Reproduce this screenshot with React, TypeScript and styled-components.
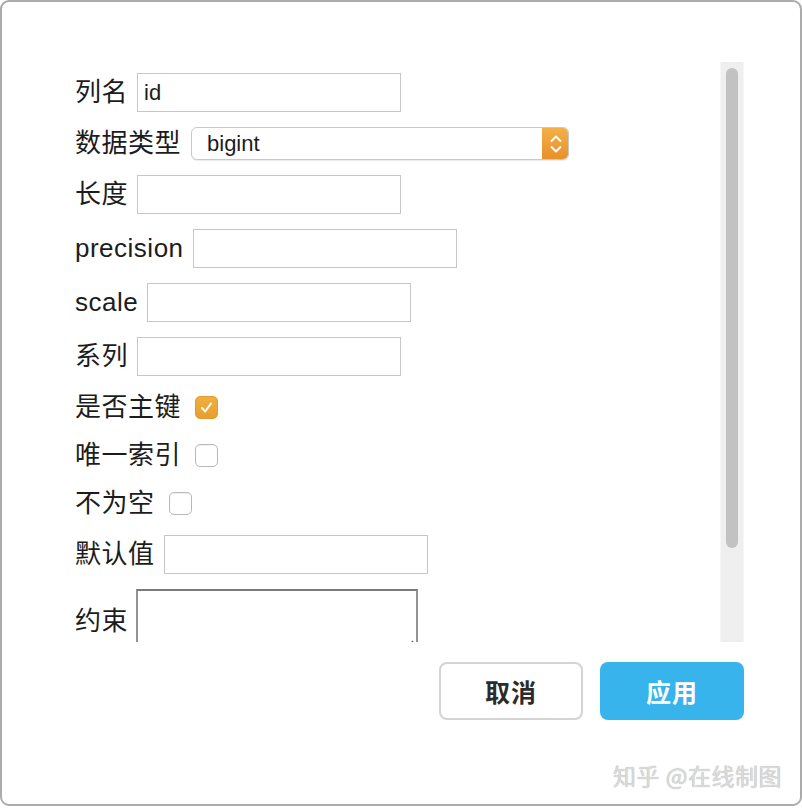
import React from 'react'
import styled, { createGlobalStyle } from 'styled-components'

const GlobalStyle = createGlobalStyle`
  html, body {
    margin: 0;
    padding: 0;
    background: #ffffff;
  }
  body {
    font-family: "Liberation Sans", "Noto Sans CJK SC", sans-serif;
    color: #1c1c1c;
  }
`

const Window = styled.div`
  box-sizing: border-box;
  width: 802px;
  height: 806px;
  border: 2px solid #ababab;
  border-radius: 9px;
  background: #ffffff;
  padding: 60px 56px 0 73px;
  display: flex;
  flex-direction: column;
`

const ScrollArea = styled.div`
  display: flex;
  height: 580px;
`

const Form = styled.div`
  flex: 1;
  overflow: hidden;
  padding-top: 11px;
  display: flex;
  flex-direction: column;
  gap: 15px;
`

const Row = styled.div`
  display: flex;
  align-items: center;
  gap: 9px;
  min-height: 33px;
  flex-shrink: 0;
`

const Label = styled.span`
  font-size: 26px;
  line-height: 33px;
  letter-spacing: 0.5px;
  white-space: nowrap;
`

const TextInput = styled.input`
  box-sizing: border-box;
  width: 264px;
  height: 39px;
  border: 1px solid #c6c6c6;
  border-radius: 0;
  padding: 0 6px;
  font-family: "Liberation Sans", sans-serif;
  font-size: 22px;
  color: #1c1c1c;
  outline: none;
  background: #fff;
`

const SelectBox = styled.div`
  box-sizing: border-box;
  width: 378px;
  height: 33px;
  margin-left: 1px;
  border: 1px solid #c9c9c9;
  border-radius: 6px;
  box-shadow: 0 1px 1px rgba(0, 0, 0, 0.08);
  display: flex;
  align-items: center;
  overflow: hidden;
  background: #fff;
`

const SelectValue = styled.span`
  flex: 1;
  padding-left: 15px;
  font-size: 22px;
  color: #1c1c1c;
`

const SelectCap = styled.span`
  width: 27px;
  align-self: stretch;
  margin: -1px -1px -1px 0;
  background: linear-gradient(#f4b048, #e8902a);
  display: flex;
  align-items: center;
  justify-content: center;
`

const Check = styled.span<{ $checked?: boolean }>`
  box-sizing: border-box;
  width: 23px;
  height: 23px;
  margin-left: 5px;
  border-radius: 5px;
  display: flex;
  align-items: center;
  justify-content: center;
  background: ${({ $checked }) =>
    $checked ? 'linear-gradient(#f1ae40, #e89e30)' : '#ffffff'};
  border: 1px solid ${({ $checked }) => ($checked ? '#e39a2e' : '#b9b9b9')};
  box-shadow: ${({ $checked }) =>
    $checked ? 'none' : 'inset 0 1px 1px rgba(0,0,0,0.06)'};
`

const TextArea = styled.div`
  position: relative;
  box-sizing: border-box;
  width: 282px;
  height: 64px;
  margin-left: -1px;
  border: 2px solid #939393;
  border-top-color: #7a7a7a;
  background: #fff;
`

const Grip = styled.svg`
  position: absolute;
  right: 2px;
  bottom: 2px;
`

const Track = styled.div`
  width: 24px;
  flex-shrink: 0;
  box-sizing: border-box;
  background: #efefef;
  border-left: 1px solid #f6f6f6;
  border-right: 1px solid #f6f6f6;
  padding-top: 6px;
`

const Thumb = styled.div`
  width: 12px;
  height: 480px;
  margin: 0 auto;
  border-radius: 6px;
  background: #c2c2c2;
`

const ButtonBar = styled.div`
  display: flex;
  justify-content: flex-end;
  gap: 17px;
  margin-top: 20px;
`

const Button = styled.button<{ $primary?: boolean }>`
  box-sizing: border-box;
  width: 144px;
  height: 58px;
  border-radius: 8px;
  border: ${({ $primary }) => ($primary ? 'none' : '2px solid #d4d4d4')};
  background: ${({ $primary }) => ($primary ? '#38b4ec' : '#ffffff')};
  color: ${({ $primary }) => ($primary ? '#ffffff' : '#2b2b2b')};
  font-family: "Noto Sans CJK SC", sans-serif;
  font-weight: 700;
  font-size: 25px;
  letter-spacing: 1px;
  padding: 0;
`

const Watermark = styled.div`
  align-self: flex-end;
  margin-top: 40px;
  margin-right: -38px;
  font-family: "Noto Sans CJK SC", sans-serif;
  font-size: 23px;
  line-height: 30px;
  color: #dadada;
  text-shadow: 0 0 1px #a8a8a8;
  letter-spacing: 0.5px;
`

const CheckMark = () => (
  <svg width="15" height="15" viewBox="0 0 15 15">
    <path d="M3 8 L6.2 11.5 L12 3.5" fill="none" stroke="#fff" strokeWidth="2" strokeLinecap="round" strokeLinejoin="round" />
  </svg>
)

const Chevrons = () => (
  <svg width="14" height="22" viewBox="0 0 14 22">
    <path d="M2.5 8 L7 3.5 L11.5 8" fill="none" stroke="#fff" strokeWidth="1.8" strokeLinecap="round" strokeLinejoin="round" />
    <path d="M2.5 14 L7 18.5 L11.5 14" fill="none" stroke="#fff" strokeWidth="1.8" strokeLinecap="round" strokeLinejoin="round" />
  </svg>
)

const fields: { label: string }[] = [
  { label: '长度' },
  { label: 'precision' },
  { label: 'scale' },
  { label: '系列' },
]

const flags: { label: string; checked: boolean }[] = [
  { label: '是否主键', checked: true },
  { label: '唯一索引', checked: false },
  { label: '不为空', checked: false },
]

export default function App() {
  return (
    <>
      <GlobalStyle />
      <Window>
        <ScrollArea>
          <Form>
            <Row>
              <Label>列名</Label>
              <TextInput defaultValue="id" />
            </Row>
            <Row>
              <Label>数据类型</Label>
              <SelectBox>
                <SelectValue>bigint</SelectValue>
                <SelectCap>
                  <Chevrons />
                </SelectCap>
              </SelectBox>
            </Row>
            {fields.map((f) => (
              <Row key={f.label}>
                <Label>{f.label}</Label>
                <TextInput />
              </Row>
            ))}
            {flags.map((f) => (
              <Row key={f.label}>
                <Label>{f.label}</Label>
                <Check $checked={f.checked}>{f.checked && <CheckMark />}</Check>
              </Row>
            ))}
            <Row>
              <Label>默认值</Label>
              <TextInput />
            </Row>
            <Row>
              <Label>约束</Label>
              <TextArea>
                <Grip width="10" height="10" viewBox="0 0 10 10">
                  <path d="M2 9 L9 2" stroke="#555" strokeWidth="1.2" />
                </Grip>
              </TextArea>
            </Row>
          </Form>
          <Track>
            <Thumb />
          </Track>
        </ScrollArea>
        <ButtonBar>
          <Button>取消</Button>
          <Button $primary>应用</Button>
        </ButtonBar>
        <Watermark>知乎 @在线制图</Watermark>
      </Window>
    </>
  )
}
